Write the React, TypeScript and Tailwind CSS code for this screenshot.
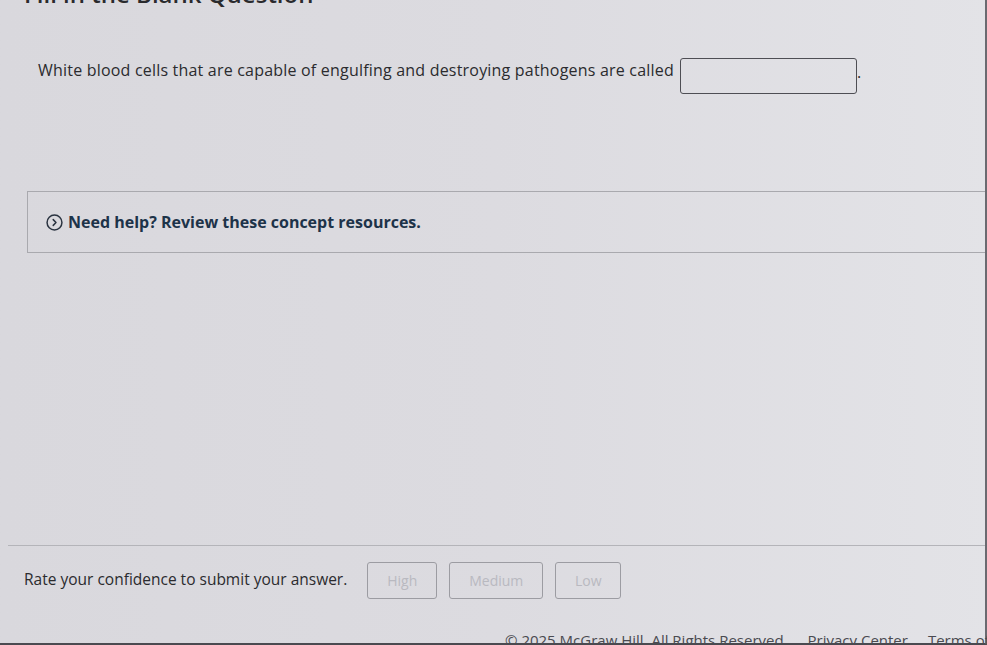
import React from "react";

const font = { fontFamily: '"Open Sans", "Liberation Sans", Arial, sans-serif' };

function ChevronCircle() {
  return (
    <svg width="17" height="17" viewBox="0 0 16 16" className="shrink-0">
      <circle cx="8" cy="8" r="7" fill="none" stroke="#2a3340" strokeWidth="1.4" />
      <path d="M6.8 5.3 L9.4 8 L6.8 10.7" fill="none" stroke="#2a3340" strokeWidth="1.4" strokeLinecap="round" strokeLinejoin="round" />
    </svg>
  );
}

function RateButton({ label, w }: { label: string; w: string }) {
  return (
    <button
      className={`${w} h-[37px] rounded-[3px] border border-[#9c9ca2] bg-transparent text-[14px] text-[#b9b9c0]`}
    >
      {label}
    </button>
  );
}

export default function App() {
  return (
    <div
      style={font}
      className="relative h-[645px] w-[987px] overflow-hidden bg-gradient-to-r from-[#d9d8dd] via-[#dcdbe0] to-[#e3e3e7] text-[#2b2b2e]"
    >
      <div className="flex h-full flex-col border-r-2 border-b-2 border-r-[#6a6a70] border-b-[#4a4a50]">
        {/* Title */}
        <div className="mt-[-20px] whitespace-nowrap pl-[24px] text-[24px] font-semibold leading-[28px] text-[#2a2a2d]">
          Fill in the Blank Question
        </div>

        {/* Question prompt */}
        <div className="mt-[50px] flex items-end whitespace-nowrap pl-[38px] text-[16px] tracking-[0.2px]">
          <span className="pb-[12px]">
            White blood cells that are capable of engulfing and destroying pathogens are called
          </span>
          <span className="ml-[6px] h-[36px] w-[177px] rounded-[3px] border border-[#4e4e54]" />
          <span className="pb-[10px]">.</span>
        </div>

        {/* Help resources */}
        <div className="ml-[27px] mt-[97px] flex h-[62px] items-center gap-[5px] border-y border-l border-[#a9a9ae] pl-[18px]">
          <ChevronCircle />
          <span className="text-[16px] font-bold text-[#1d3349]">
            Need help? Review these concept resources.
          </span>
        </div>

        <div className="flex-1" />

        {/* Confidence rating */}
        <div className="ml-[8px] flex items-center border-t border-[#b4b4b9] pb-[30px] pl-[16px] pt-[16px]">
          <span className="text-[15.5px] text-[#2b2b2e]">Rate your confidence to submit your answer.</span>
          <div className="ml-[20px] flex gap-[12px]">
            <RateButton label="High" w="w-[70px]" />
            <RateButton label="Medium" w="w-[94px]" />
            <RateButton label="Low" w="w-[66px]" />
          </div>
        </div>

        {/* Footer */}
        <div className="mb-[-8px] flex gap-[20px] whitespace-nowrap pl-[505px] text-[15px] text-[#4a4a50]">
          <span>© 2025 McGraw Hill. All Rights Reserved.</span>
          <span>Privacy Center</span>
          <span>Terms of Use</span>
        </div>
      </div>
    </div>
  );
}
